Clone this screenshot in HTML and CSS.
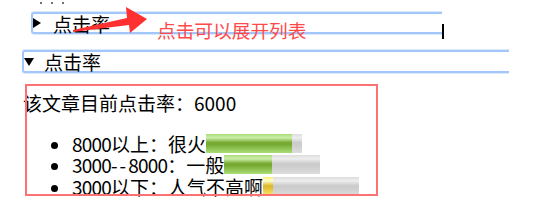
FILE: index.html
```html
<!DOCTYPE html>
<html lang="zh">
<head>
<meta charset="utf-8">
<link rel="stylesheet" href="styles.css">
</head>
<body>
<div class="page">
  <div class="clip"><span class="dot"></span><span class="dot"></span><span class="dot"></span></div>
  <div class="sum sum1"><span class="tri-right"></span><span class="label">点击率</span></div>
  <div class="sum sum2"><span class="tri-down"></span><span class="label">点击率</span></div>
  <p class="info">该文章目前点击率：6000</p>
  <ul class="levels">
    <li><span class="num">8000</span>以上：很火<span class="bar"><span class="fill good" style="width:90%"></span></span></li>
    <li><span class="num">3000<span class="dash">--</span>8000</span>：一般<span class="bar"><span class="fill good" style="width:50%"></span></span></li>
    <li><span class="num">3000</span>以下：人气不高啊<span class="bar"><span class="fill low" style="width:10%"></span></span></li>
  </ul>

  <svg class="arrow" width="90" height="40" viewBox="0 0 90 40">
    <polygon points="3,25 57,13 56,2 77,14 60,28 59,20 3,27" fill="#ff3030"/>
  </svg>
  <div class="note">点击可以展开列表</div>
  <div class="caret"></div>
  <div class="redbox"></div>
</div>
</body>
</html>
```

FILE: styles.css
```css
html, body {
  margin: 0;
  padding: 0;
  background: #fff;
}
.page {
  position: relative;
  width: 558px;
  height: 209px;
  overflow: hidden;
  font-family: "Noto Sans CJK SC", "Noto Sans", sans-serif;
  font-size: 19px;
  line-height: 21.6px;
  color: #000;
}
.clip {
  height: 12px;
  display: flex;
  align-items: flex-start;
  padding-left: 40px;
  padding-top: 2px;
  box-sizing: border-box;
  gap: 9px;
}
.dot {
  width: 2px;
  height: 2px;
  background: #444;
  border-radius: 1px;
}
.sum {
  box-sizing: border-box;
  display: flex;
  align-items: center;
  border: 2px solid #a3c6fb;
  border-right: none;
  border-radius: 3px 0 0 3px;
  box-shadow: 0 -1px 0 #dbe9fe, 0 1px 0 #dbe9fe;
}
.sum1 {
  margin-left: 31px;
  width: 411px;
  height: 22px;
}
.sum2 {
  margin-top: 16px;
  margin-left: 22px;
  width: 487px;
  height: 23px;
}
.tri-right {
  width: 0;
  height: 0;
  border-left: 8px solid #000;
  border-top: 5px solid transparent;
  border-bottom: 5px solid transparent;
  margin-right: 12px;
}
.tri-down {
  width: 0;
  height: 0;
  border-top: 8px solid #000;
  border-left: 5px solid transparent;
  border-right: 5px solid transparent;
  margin-right: 10px;
}
.label {
  line-height: 19px;
}
.info {
  margin: 19px 0 0 0;
  padding-left: 23px;
}
.levels {
  margin: 19px 0 0 0;
  padding-left: 72px;
  list-style: disc;
}
.num {
  letter-spacing: -0.8px;
}
.num .dash {
  letter-spacing: 2px;
}
.bar {
  display: inline-block;
  vertical-align: top;
  margin-top: 1px;
  width: 96px;
  height: 19px;
  background: linear-gradient(to bottom, #ddd 0%, #eee 20%, #ccc 45%, #ccc 55%, #ddd 100%);
}
.fill {
  display: block;
  height: 100%;
}
.good {
  background: linear-gradient(to bottom, #ad7 0%, #cea 20%, #7a3 45%, #7a3 55%, #ad7 100%);
}
.low {
  background: linear-gradient(to bottom, #fe7 0%, #ffc 20%, #db3 45%, #db3 55%, #fe7 100%);
}
.arrow {
  position: absolute;
  left: 70px;
  top: 5px;
}
.note {
  position: absolute;
  left: 157px;
  top: 19px;
  font-size: 18.7px;
  line-height: 22px;
  color: #ff4a4a;
}
.caret {
  position: absolute;
  left: 442px;
  top: 24px;
  width: 2px;
  height: 15px;
  background: #000;
}
.redbox {
  position: absolute;
  left: 25px;
  top: 84px;
  width: 353px;
  height: 112px;
  box-sizing: border-box;
  border: 2px solid #ff7070;
}
```
